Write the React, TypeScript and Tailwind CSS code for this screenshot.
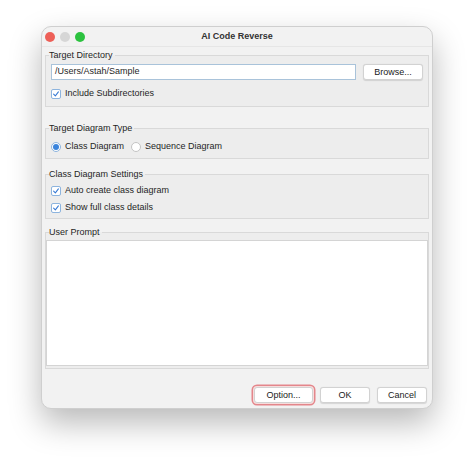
import React from "react";

function CheckBox({ label }: { label: string }) {
  return (
    <label className="flex h-[14px] items-center gap-[4px]">
      <span className="flex h-[10px] w-[10px] items-center justify-center rounded-[2px] border border-[#8db4de] bg-white">
        <svg viewBox="0 0 10 10" className="h-[8px] w-[8px]">
          <path d="M2 5.2 L4.2 7.4 L8 2.4" fill="none" stroke="#3478d4" strokeWidth="1.3" strokeLinecap="round" strokeLinejoin="round" />
        </svg>
      </span>
      <span>{label}</span>
    </label>
  );
}

function Radio({ label, checked }: { label: string; checked?: boolean }) {
  return (
    <label className="flex h-[14px] items-center gap-[4px]">
      <span
        className={
          checked
            ? "flex h-[10px] w-[10px] items-center justify-center rounded-full border border-[#8db4de] bg-white"
            : "flex h-[10px] w-[10px] items-center justify-center rounded-full border border-[#c4c4c4] bg-white"
        }
      >
        {checked && <span className="h-[6px] w-[6px] rounded-full bg-[#3a84dc]" />}
      </span>
      <span>{label}</span>
    </label>
  );
}

function Group({
  title,
  className,
  legendClass,
  children,
}: {
  title: string;
  className?: string;
  legendClass?: string;
  children: React.ReactNode;
}) {
  return (
    <fieldset className={"border border-[#d9d9d9] bg-[#ededed] " + (className ?? "px-[5px]")}>
      <legend className={"pr-[2px] leading-[11px] " + (legendClass ?? "-ml-[2px]")}>{title}</legend>
      {children}
    </fieldset>
  );
}

function Button({ children, focused, width }: { children: React.ReactNode; focused?: boolean; width: string }) {
  return (
    <button
      className={
        "h-[16px] rounded-[3px] border border-[#d2d2d2] bg-white text-[9px] leading-none text-[#1a1a1a] " +
        width +
        (focused ? " shadow-[0_0_0_1px_#f6dcdc,0_0_0_2.5px_#e4868b]" : " shadow-[0_0.5px_1px_rgba(0,0,0,0.12)]")
      }
    >
      {children}
    </button>
  );
}

export default function App() {
  return (
    <div className="h-[462px] w-[474px] bg-white pl-[41px] pt-[26px] font-['Liberation_Sans',Arial,sans-serif] text-[9px] text-[#1f1f1f]">
      <div className="flex h-[383px] w-[392px] flex-col rounded-[10px] border border-[#cfcfcf] bg-[#f2f2f2] shadow-[0_14px_32px_rgba(0,0,0,0.28)]">
        <div className="grid h-[20px] grid-cols-[1fr_auto_1fr] items-center border-b border-[#e6e6e6] px-[3px]">
          <div className="flex gap-[5px]">
            <span className="h-[10px] w-[10px] rounded-full bg-[#ed5f57]" />
            <span className="h-[10px] w-[10px] rounded-full bg-[#d6d6d6]" />
            <span className="h-[10px] w-[10px] rounded-full bg-[#2cc23f]" />
          </div>
          <div className="font-bold text-[#333]">AI Code Reverse</div>
          <div />
        </div>

        <div className="flex flex-1 flex-col px-[3px] pb-[5px] pt-[3px]">
          <Group title="Target Directory" className="px-[5px] pb-[5px]">
            <div className="flex gap-[7px] pt-[3px]">
              <div className="flex h-[16px] flex-1 items-center border border-[#a9c3da] bg-white pl-[3px]">/Users/Astah/Sample</div>
              <Button width="w-[60px]">Browse...</Button>
            </div>
            <div className="mt-[7px]">
              <CheckBox label="Include Subdirectories" />
            </div>
          </Group>

          <Group title="Target Diagram Type" className="mt-[16px] px-[5px] pb-[4px]">
            <div className="flex gap-[7px] pt-[6px]">
              <Radio label="Class Diagram" checked />
              <Radio label="Sequence Diagram" />
            </div>
          </Group>

          <Group title="Class Diagram Settings" className="mt-[10px] px-[5px] pb-[3px]">
            <div className="flex flex-col gap-[3px] pt-[4px]">
              <CheckBox label="Auto create class diagram" />
              <CheckBox label="Show full class details" />
            </div>
          </Group>

          <Group title="User Prompt" className="mt-[8px] px-0 pb-[2px]" legendClass="ml-[3px]">
            <div className="mt-[2px] h-[126px] border border-[#d4d4d4] bg-white" />
          </Group>

          <div className="mt-auto flex justify-end gap-[7px] pr-[2px]">
            <Button focused width="w-[59px]">Option...</Button>
            <Button width="w-[50px]">OK</Button>
            <Button width="w-[50px]">Cancel</Button>
          </div>
        </div>
      </div>
    </div>
  );
}
